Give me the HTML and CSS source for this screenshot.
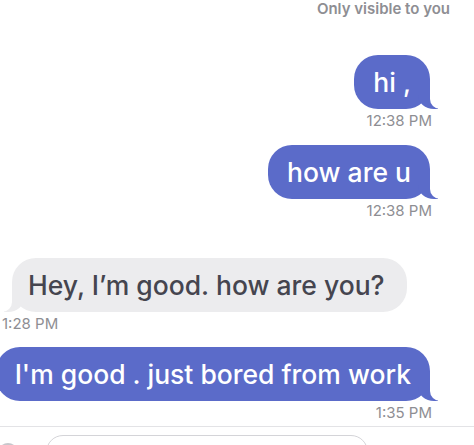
FILE: index.html
```
<!DOCTYPE html>
<html lang="en">

<head>
    <meta charset="UTF-8">
    <meta name="viewport" content="width=device-width, initial-scale=1.0">
    <title>Messages</title>
    <link rel="stylesheet" href="styles.css">
</head>

<body>
    <div class="chat">
        <p class="note">Only visible to you</p>

        <div class="msg out first">
            <div class="bubble sent">hi ,</div>
            <span class="time">12:38 PM</span>
        </div>

        <div class="msg out">
            <div class="bubble sent">how are u</div>
            <span class="time">12:38 PM</span>
        </div>

        <div class="msg in">
            <div class="bubble received">Hey, I’m good. how are you?</div>
            <span class="time">1:28 PM</span>
        </div>

        <div class="msg out last">
            <div class="bubble sent">I'm good . just bored from work</div>
            <span class="time">1:35 PM</span>
        </div>
    </div>

    <div class="composer">
        <span class="plus"></span>
        <div class="field"></div>
    </div>
</body>

</html>
```
FILE: styles.css
```
body {
    margin: 0;
    font-family: Inter, "Liberation Sans", Arial, sans-serif;
    background-color: #fff;
    width: 474px;
    height: 445px;
    overflow: hidden;
}

.chat {
    display: flex;
    flex-direction: column;
}

.note {
    margin: 0;
    padding: 1px 24px 0 0;
    text-align: right;
    font-size: 15px;
    line-height: 16px;
    font-weight: 600;
    color: #8e8e93;
}

.msg {
    display: flex;
    flex-direction: column;
}

.msg.out {
    align-items: flex-end;
    padding-right: 44px;
    margin-top: 15px;
}

.msg.out.first {
    margin-top: 38px;
}

.msg.in {
    align-items: flex-start;
    padding-left: 12px;
    margin-top: 38px;
}

.msg.out.last {
    margin-top: 14px;
}

.bubble {
    position: relative;
    font-size: 26.5px;
    font-weight: 500;
    line-height: 34px;
    padding: 10px 19px;
    border-radius: 24px;
    white-space: nowrap;
}

.bubble.sent {
    background-color: #5b6bc9;
    color: #fff;
}

.bubble.received {
    background-color: #ececee;
    color: #45454f;
    padding: 10px 22px 10px 16px;
}

.bubble.sent::before {
    content: "";
    position: absolute;
    right: -8px;
    bottom: 0;
    width: 20px;
    height: 24px;
    background-color: #5b6bc9;
    border-bottom-left-radius: 16px 14px;
}

.bubble.sent::after {
    content: "";
    position: absolute;
    right: -26px;
    bottom: 0;
    width: 26px;
    height: 26px;
    background-color: #fff;
    border-bottom-left-radius: 10px;
}

.bubble.received::before {
    content: "";
    position: absolute;
    left: -8px;
    bottom: 0;
    width: 20px;
    height: 24px;
    background-color: #ececee;
    border-bottom-right-radius: 16px 14px;
}

.bubble.received::after {
    content: "";
    position: absolute;
    left: -26px;
    bottom: 0;
    width: 26px;
    height: 26px;
    background-color: #fff;
    border-bottom-right-radius: 10px;
}

.time {
    margin-top: 3px;
    font-size: 15px;
    line-height: 18px;
    color: #8e8e93;
}

.msg.out .time {
    margin-right: -2px;
}

.msg.in .time {
    margin-left: -10px;
}

.composer {
    margin-top: 4px;
    border-top: 1px solid #e3e3e6;
    display: flex;
    align-items: flex-start;
    padding-top: 8px;
}

.plus {
    width: 20px;
    height: 20px;
    margin: 8px 0 0 -2px;
    border-radius: 50%;
    background-color: #c7c7cc;
}

.field {
    margin-left: 28px;
    width: 320px;
    height: 34px;
    border: 1px solid #d4d4d8;
    border-radius: 17px;
}
```
